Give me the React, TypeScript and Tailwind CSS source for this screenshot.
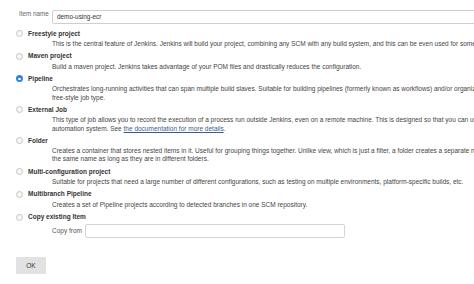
import React from "react";

type Item = {
  label: string;
  lines: React.ReactNode[];
  selected?: boolean;
};

const items: Item[] = [
  {
    label: "Freestyle project",
    lines: [
      "This is the central feature of Jenkins. Jenkins will build your project, combining any SCM with any build system, and this can be even used for something other than software build.",
    ],
  },
  {
    label: "Maven project",
    lines: ["Build a maven project. Jenkins takes advantage of your POM files and drastically reduces the configuration."],
  },
  {
    label: "Pipeline",
    selected: true,
    lines: [
      "Orchestrates long-running activities that can span multiple build slaves. Suitable for building pipelines (formerly known as workflows) and/or organizing complex activities that do not easily fit in",
      "free-style job type.",
    ],
  },
  {
    label: "External Job",
    lines: [
      "This type of job allows you to record the execution of a process run outside Jenkins, even on a remote machine. This is designed so that you can use Jenkins as a dashboard of your existing",
      <>
        automation system. See{" "}
        <a href="#" className="text-[#3d5a8a] underline">
          the documentation for more details
        </a>
        .
      </>,
    ],
  },
  {
    label: "Folder",
    lines: [
      "Creates a container that stores nested items in it. Useful for grouping things together. Unlike view, which is just a filter, a folder creates a separate namespace, so you can have multiple things of",
      "the same name as long as they are in different folders.",
    ],
  },
  {
    label: "Multi-configuration project",
    lines: [
      "Suitable for projects that need a large number of different configurations, such as testing on multiple environments, platform-specific builds, etc.",
    ],
  },
  {
    label: "Multibranch Pipeline",
    lines: ["Creates a set of Pipeline projects according to detected branches in one SCM repository."],
  },
];

function Radio({ selected }: { selected?: boolean }) {
  if (selected) {
    return (
      <span className="flex h-[7px] w-[7px] shrink-0 items-center justify-center rounded-full bg-[#2f80ed]">
        <span className="h-[2.5px] w-[2.5px] rounded-full bg-white" />
      </span>
    );
  }
  return <span className="h-[7px] w-[7px] shrink-0 rounded-full border-[0.75px] border-[#c4c4c4] bg-[#f7f7f7]" />;
}

function LabelRow({ label, selected }: { label: string; selected?: boolean }) {
  return (
    <div className="flex h-[10px] items-center pl-[16px]">
      <Radio selected={selected} />
      <span className="ml-[5px] text-[6.5px] font-bold leading-[10px] text-[#333]">{label}</span>
    </div>
  );
}

export default function App() {
  return (
    <div className="h-[284px] w-[474px] overflow-hidden bg-white font-['Liberation_Sans',Arial,sans-serif] text-[#333]">
      {/* item name */}
      <div className="flex items-start pt-[10px]">
        <span className="ml-[19px] w-[33px] shrink-0 text-[6.3px] leading-[8px] text-[#666]">Item name</span>
        <div className="flex h-[14px] w-[440px] shrink-0 items-center rounded-[2px] border-[0.75px] border-[#cfcfcf] pl-[4px] text-[6.4px] text-[#333]">
          demo-using-ecr
        </div>
      </div>

      <div className="mt-[4.5px] flex flex-col">
        {items.map((it) => (
          <div key={it.label}>
            <LabelRow label={it.label} selected={it.selected} />
            <div className="mb-[3px] mt-[1.5px] whitespace-nowrap pl-[52px] text-[6.5px] leading-[8.2px] text-[#444]">
              {it.lines.map((l, i) => (
                <div key={i}>{l}</div>
              ))}
            </div>
          </div>
        ))}

        <LabelRow label="Copy existing Item" />
        <div className="mt-[2px] flex items-center pl-[52px]">
          <span className="w-[33px] shrink-0 text-[6.5px] leading-[8px] text-[#555]">Copy from</span>
          <div className="h-[14px] w-[260px] shrink-0 rounded-[2px] border-[0.75px] border-[#d4d4d4]" />
        </div>
      </div>

      <button className="ml-[16px] mt-[19px] flex h-[17px] w-[30px] items-center justify-center rounded-[1px] bg-[#e2e2e2] text-[6.5px] text-[#333]">
        OK
      </button>
    </div>
  );
}
